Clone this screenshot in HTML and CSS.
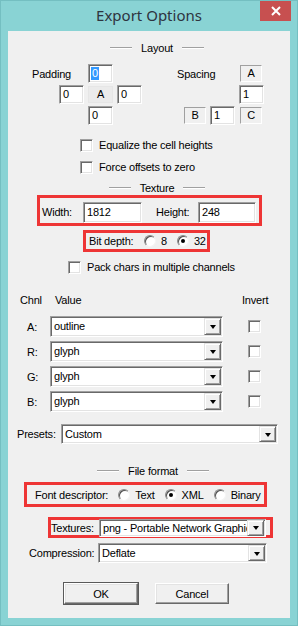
FILE: index.html
```html
<!DOCTYPE html>
<html lang="en">
<head>
  <meta charset="UTF-8">
  <meta name="viewport" content="width=device-width, initial-scale=1.0">
  <title>Export Options</title>
  <link rel="stylesheet" href="styles.css">
</head>
<body>
  <div class="window">
    <div class="titlebar">
      <span class="title">Export Options</span>
      <button class="close" aria-label="Close">
        <svg width="10" height="10" viewBox="0 0 10 10"><path d="M1 1 L9 9 M9 1 L1 9" stroke="#fff" stroke-width="2" fill="none"/></svg>
      </button>
    </div>

    <div class="client">
      <div class="group-title layout"><span class="rule"></span><span>Layout</span><span class="rule"></span></div>

      <div class="pad-row">
        <div class="pad-grid">
          <span class="pad-label">Padding</span>
          <div class="edit p-top"><span class="sel">0</span></div>
          <div class="edit p-left">0</div>
          <div class="tag flat p-mid">A</div>
          <div class="edit p-right">0</div>
          <div class="edit p-bottom">0</div>
        </div>
        <div class="space-grid">
          <span class="space-label">Spacing</span>
          <div class="tag s-a">A</div>
          <div class="edit s-mid">1</div>
          <div class="tag s-b">B</div>
          <div class="edit s-in">1</div>
          <div class="tag s-c">C</div>
        </div>
      </div>

      <label class="check-row equalize"><span class="checkbox"></span>Equalize the cell heights</label>
      <label class="check-row force"><span class="checkbox"></span>Force offsets to zero</label>

      <div class="group-title texture"><span class="rule"></span><span>Texture</span><span class="rule"></span></div>

      <div class="mark size-box">
        <span class="w-label">Width:</span>
        <div class="edit size-edit">1812</div>
        <span class="h-label">Height:</span>
        <div class="edit size-edit h-edit">248</div>
      </div>

      <div class="mark bit-box">
        <span class="bit-label">Bit depth:</span>
        <label class="radio-item"><span class="radio"></span>8</label>
        <label class="radio-item"><span class="radio on"></span>32</label>
      </div>

      <label class="check-row pack"><span class="checkbox"></span>Pack chars in multiple channels</label>

      <div class="chan-head">
        <span class="h-chnl">Chnl</span>
        <span class="h-value">Value</span>
        <span>Invert</span>
      </div>

      <div class="chan-grid">
        <span class="chan-label">A:</span>
        <div class="combo"><span class="combo-text">outline</span><span class="combo-btn"></span></div>
        <span class="checkbox"></span>

        <span class="chan-label">R:</span>
        <div class="combo"><span class="combo-text">glyph</span><span class="combo-btn"></span></div>
        <span class="checkbox"></span>

        <span class="chan-label">G:</span>
        <div class="combo"><span class="combo-text">glyph</span><span class="combo-btn"></span></div>
        <span class="checkbox"></span>

        <span class="chan-label">B:</span>
        <div class="combo"><span class="combo-text">glyph</span><span class="combo-btn"></span></div>
        <span class="checkbox"></span>
      </div>

      <div class="presets-row">
        <span class="presets-label">Presets:</span>
        <div class="combo presets-combo"><span class="combo-text">Custom</span><span class="combo-btn"></span></div>
      </div>

      <div class="group-title file-format"><span class="rule"></span><span>File format</span><span class="rule"></span></div>

      <div class="mark desc-box">
        <span>Font descriptor:</span>
        <label class="radio-item"><span class="radio"></span>Text</label>
        <label class="radio-item"><span class="radio on"></span>XML</label>
        <label class="radio-item"><span class="radio"></span>Binary</label>
      </div>

      <div class="mark tex-box">
        <span class="tex-label">Textures:</span>
        <div class="combo tex-combo"><span class="combo-text">png - Portable Network Graphics</span><span class="combo-btn"></span></div>
      </div>

      <div class="comp-row">
        <span class="comp-label">Compression:</span>
        <div class="combo comp-combo"><span class="combo-text">Deflate</span><span class="combo-btn"></span></div>
      </div>

      <div class="button-row">
        <button class="push default">OK</button>
        <button class="push">Cancel</button>
      </div>
    </div>
  </div>
</body>
</html>
```

FILE: styles.css
```css
* {
  margin: 0;
  padding: 0;
  box-sizing: border-box;
}

body {
  width: 298px;
  height: 626px;
  overflow: hidden;
  background: #89d3d4;
  font-family: 'Liberation Sans', Arial, sans-serif;
  font-size: 11px;
  letter-spacing: -0.2px;
  color: #000;
  white-space: nowrap;
}

.window {
  width: 298px;
  height: 626px;
  background: #89d3d4;
  border: 1px solid #74bfc1;
  display: flex;
  flex-direction: column;
}

/* title bar */
.titlebar {
  height: 30px;
  display: grid;
  grid-template-columns: 1fr auto 1fr;
}

.title {
  grid-column: 2;
  font-family: 'Noto Sans', sans-serif;
  font-size: 15px;
  letter-spacing: 0;
  line-height: 28px;
  color: #2e3440;
}

.close {
  grid-column: 3;
  justify-self: end;
  align-self: start;
  width: 31px;
  height: 20px;
  margin-right: 6px;
  border: none;
  background: #c75050;
  display: flex;
  align-items: center;
  justify-content: center;
}

/* client area */
.client {
  height: 587px;
  margin: 0 7px;
  background: #f0f0f0;
  display: flex;
  flex-direction: column;
  padding-top: 10px;
}

.group-title {
  height: 14px;
  line-height: 14px;
  display: flex;
  align-items: center;
  justify-content: center;
  gap: 9px;
  padding-left: 16px;
}

.group-title .rule {
  width: 22px;
  height: 2px;
  border-top: 1px solid #a0a0a0;
  border-bottom: 1px solid #fff;
}

.file-format {
  padding-left: 8px;
}

/* sunken edit box */
.edit {
  background: #fff;
  border: 1px solid;
  border-color: #a0a0a0 #fff #fff #a0a0a0;
  box-shadow: inset 1px 1px #696969, inset -1px -1px #e3e3e3;
  height: 19px;
  padding: 0 3px;
  line-height: 17px;
}

.sel {
  background: #3399ff;
  color: #fff;
  display: inline-block;
  line-height: 13px;
  padding: 0 1px;
  margin-left: -1px;
}

.tag {
  width: 22px;
  height: 17px;
  line-height: 15px;
  text-align: center;
  align-self: center;
  border: 1px solid;
  border-color: #a0a0a0 #fff #fff #a0a0a0;
}

.tag.flat {
  width: 25px;
  border-color: #e6e6e6;
  background: #ebebeb;
}

/* padding / spacing */
.pad-row {
  display: flex;
  margin-top: 9px;
  padding-left: 24px;
}

.pad-grid {
  display: grid;
  grid-template-columns: 23px 25px 25px 25px;
  grid-template-rows: 19px 19px 19px;
  column-gap: 4px;
  row-gap: 2px;
}

.pad-label {
  grid-column: 1 / 3;
  grid-row: 1;
  align-self: center;
}

.p-top { grid-column: 3; grid-row: 1; }
.p-left { grid-column: 2; grid-row: 2; }
.p-mid { grid-column: 3; grid-row: 2; }
.p-right { grid-column: 4; grid-row: 2; }
.p-bottom { grid-column: 3; grid-row: 3; }

.space-grid {
  display: grid;
  grid-template-columns: 22px 25px 25px;
  grid-template-rows: 19px 19px 19px;
  column-gap: 4px;
  row-gap: 2px;
  margin-left: 42px;
}

.space-label {
  grid-column: 1 / 3;
  grid-row: 1;
  align-self: center;
  margin-left: -7px;
}

.s-a { grid-column: 3; grid-row: 1; margin-left: 1px; }
.s-mid { grid-column: 3; grid-row: 2; }
.s-b { grid-column: 1; grid-row: 3; }
.s-in { grid-column: 2; grid-row: 3; }
.s-c { grid-column: 3; grid-row: 3; margin-left: 1px; }

/* checkboxes */
.checkbox {
  display: block;
  flex: none;
  width: 13px;
  height: 13px;
  background: #fff;
  border: 1px solid;
  border-color: #a0a0a0 #fff #fff #a0a0a0;
  box-shadow: inset 1px 1px #696969, inset -1px -1px #e3e3e3;
}

.check-row {
  display: flex;
  align-items: center;
  gap: 6px;
  height: 14px;
  margin-left: 72px;
}

.equalize { margin-top: 13px; }
.force { margin-top: 8px; }
.texture { margin-top: 7px; }

/* red highlight boxes */
.mark {
  border: 3px solid #ee3535;
  display: flex;
  align-items: center;
}

.mark > span {
  flex: none;
}

.size-box {
  width: 225px;
  height: 31px;
  margin-left: 29px;
  padding: 3px 0 0 2px;
}

.w-label { width: 41px; }

.size-edit {
  width: 59px;
  height: 21px;
  line-height: 19px;
}

.h-label {
  width: 42px;
  margin-left: 14px;
}

.h-edit { width: 58px; }

.bit-box {
  width: 127px;
  height: 22px;
  margin-top: 4px;
  margin-left: 75px;
  padding-left: 3px;
}

.bit-label { width: 45px; }

.radio-item {
  display: flex;
  align-items: center;
  gap: 5px;
  margin-left: 10px;
}

.radio {
  display: flex;
  flex: none;
  align-items: center;
  justify-content: center;
  width: 12px;
  height: 12px;
  border-radius: 50%;
  background: #fff;
  border: 1px solid;
  border-color: #8a8a8a #f4f4f4 #f4f4f4 #8a8a8a;
  box-shadow: inset 1px 1px #505050;
}

.radio.on::after {
  content: '';
  width: 4px;
  height: 4px;
  border-radius: 50%;
  background: #000;
}

.pack {
  margin-top: 8px;
  margin-left: 60px;
}

/* channels */
.chan-head {
  display: flex;
  height: 14px;
  line-height: 14px;
  margin-top: 19px;
  padding-left: 12px;
}

.h-chnl { width: 35px; }
.h-value { width: 187px; }

.chan-grid {
  display: grid;
  grid-template-columns: 23px 173px 13px;
  grid-auto-rows: 21px;
  column-gap: 0;
  row-gap: 4px;
  margin-top: 9px;
  padding-left: 19px;
  align-items: center;
}

.chan-grid .checkbox {
  margin-left: 25px;
}

/* combo box */
.combo {
  display: flex;
  height: 21px;
  padding: 1px;
  background: #fff;
  border: 1px solid;
  border-color: #a0a0a0 #fff #fff #a0a0a0;
  box-shadow: inset 1px 1px #696969, inset -1px -1px #e3e3e3;
}

.combo-text {
  flex: 1;
  padding-left: 2px;
  line-height: 17px;
  overflow: hidden;
}

.combo-btn {
  width: 17px;
  flex: none;
  background: #f0f0f0;
  border: 1px solid;
  border-color: #e3e3e3 #696969 #696969 #e3e3e3;
  box-shadow: inset 1px 1px #fff, inset -1px -1px #a0a0a0;
  display: flex;
  align-items: center;
  justify-content: center;
}

.combo-btn::after {
  content: '';
  border-left: 3.5px solid transparent;
  border-right: 3.5px solid transparent;
  border-top: 4px solid #000;
  margin-top: 1px;
}

.presets-row {
  display: flex;
  align-items: center;
  margin-top: 12px;
  padding-left: 9px;
}

.presets-label { width: 44px; }

.presets-combo {
  width: 217px;
  height: 20px;
}

.file-format { margin-top: 20px; }

.desc-box {
  width: 243px;
  height: 25px;
  margin-top: 4px;
  margin-left: 16px;
  padding-left: 8px;
}

.tex-box {
  width: 225px;
  height: 21px;
  margin-top: 10px;
  margin-left: 40px;
}

.tex-label { width: 48px; }

.tex-combo {
  width: 167px;
  height: 18px;
  padding: 0 1px;
}

.tex-combo .combo-text { line-height: 16px; }

.comp-row {
  display: flex;
  align-items: center;
  margin-top: 5px;
  padding-left: 21px;
}

.comp-label { width: 69px; }

.comp-combo {
  width: 169px;
  height: 20px;
}

/* buttons */
.button-row {
  display: flex;
  gap: 17px;
  margin-top: 20px;
  padding-left: 56px;
}

.push {
  width: 74px;
  height: 21px;
  font-family: inherit;
  font-size: 11px;
  letter-spacing: -0.2px;
  color: #000;
  background: #f0f0f0;
  border: 1px solid;
  border-color: #fff #696969 #696969 #fff;
  box-shadow: inset -1px -1px #a0a0a0, inset 1px 1px #e3e3e3;
}

.push.default {
  outline: 1px solid #5a5a5a;
}
```
